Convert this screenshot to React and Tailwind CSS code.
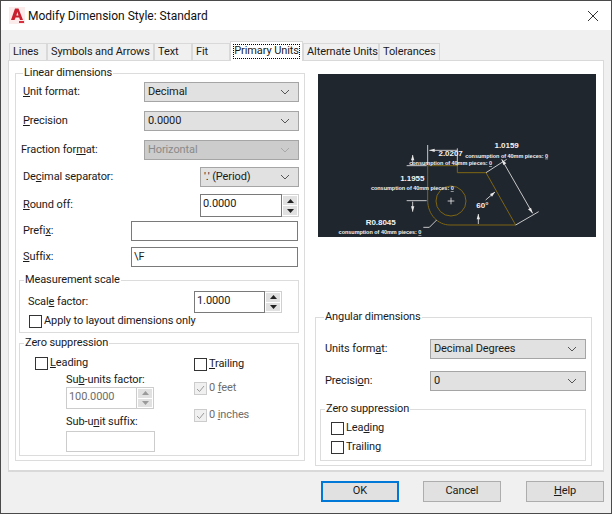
const font = { fontFamily: 'Roboto, "Noto Sans", sans-serif' }

function Chevron({ disabled }) {
  return (
    <svg width="10" height="6" viewBox="0 0 10 6" className="shrink-0">
      <path d="M1 1l4 4 4-4" fill="none" stroke={disabled ? '#a8a8a8' : '#555'} strokeWidth="1" />
    </svg>
  )
}

function Select({ value, width, disabled }) {
  return (
    <div className={`${width} h-[20px] shrink-0 flex items-center justify-between pl-[3px] pr-[8px] border border-[#a5a5a5] ${disabled ? 'bg-[#cccccc] text-[#8a8a8a]' : 'bg-[#e1e1e1]'}`}>
      <span>{value}</span>
      <Chevron disabled={disabled} />
    </div>
  )
}

function Spin({ disabled }) {
  const color = disabled ? '#9a9a9a' : '#222'
  return (
    <div className="w-[16px] self-stretch flex flex-col gap-px p-px">
      <div className="flex-1 bg-[#e1e1e1] flex items-center justify-center">
        <svg width="7" height="4" viewBox="0 0 7 4"><path d="M3.5 0L7 4H0z" fill={color} /></svg>
      </div>
      <div className="flex-1 bg-[#e1e1e1] flex items-center justify-center">
        <svg width="7" height="4" viewBox="0 0 7 4"><path d="M0 0h7L3.5 4z" fill={color} /></svg>
      </div>
    </div>
  )
}

function NumberBox({ value, width, height, disabled }) {
  return (
    <div className={`${width} ${height} shrink-0 flex`}>
      <div className={`flex-1 border pl-[2px] leading-[17px] ${disabled ? 'border-[#cccccc] text-[#6d6d6d]' : 'border-[#7a7a7a]'}`}>{value}</div>
      <div className={`flex border-y border-r ${disabled ? 'border-[#cccccc]' : 'border-[#d0d0d0]'}`}><Spin disabled={disabled} /></div>
    </div>
  )
}

function TextBox({ value, width, disabled }) {
  return (
    <div className={`${width} shrink-0 border pl-[2px] leading-[17px] ${disabled ? 'h-[21px] border-[#cccccc]' : 'h-[20px] border-[#7a7a7a]'}`}>{value}</div>
  )
}

function Check({ label, checked, disabled, className = '' }) {
  return (
    <div className={`flex items-center h-[13px] gap-[2px] whitespace-nowrap ${disabled ? 'text-[#6d6d6d]' : ''} ${className}`}>
      <span className={`w-[13px] h-[13px] shrink-0 border flex items-center justify-center ${disabled ? 'border-[#cccccc] bg-[#f0f0f0]' : 'border-[#333]'}`}>
        {checked && (
          <svg width="9" height="8" viewBox="0 0 9 8"><path d="M1 4l2.5 2.5L8 1" fill="none" stroke="#9a9a9a" /></svg>
        )}
      </span>
      <span>{label}</span>
    </div>
  )
}

function Group({ title, className = '', children }) {
  return (
    <fieldset className={`border border-[#dcdcdc] min-w-0 ${className}`}>
      <legend className="ml-[4px] px-[1px] h-[16px] leading-[15px] whitespace-nowrap">{title}</legend>
      {children}
    </fieldset>
  )
}

function Row({ label, className = '', children }) {
  return (
    <div className={`flex items-center justify-between ${className}`}>
      <span>{label}</span>
      {children}
    </div>
  )
}

function Preview() {
  const note = 'consumption of 40mm pieces: '
  return (
    <div className="w-[278px] h-[163px] bg-[#20262e] mt-[13px] ml-[3px] shrink-0">
      <svg width="278" height="163" viewBox="24 222 834 489">
        <g fill="none" stroke="#7d6512" strokeWidth="3">
          <path d="M353 497V600C353 645 385 675 420 675H617L528 518H442V497H353" />
          <circle cx="423" cy="603" r="45" />
        </g>
        <g fill="none" stroke="#e8e8e8" strokeWidth="2.5">
          <path d="M413 603h20M423 593v20" />
          <path d="M353 435v60M358 451h84M442 445v52" />
          <path d="M308 465v30M290 497h60M290 602h60M308 605v30" />
          <path d="M528 518L590 478M575 478L668 640M617 675L686 635" />
          <path d="M505 672v-30M527 600L555 576" />
          <path d="M380 660L358 682H340" />
        </g>
        <g fill="#e8e8e8">
          <path d="M358 451l16-5v10z" />
          <path d="M308 465l-5 16h10z" />
          <path d="M308 635l-5-16h10z" />
          <path d="M668 640l-14-12 9-5z" />
          <path d="M575 478l14 12-9 5z" />
          <path d="M505 642l-5 16h10z" />
          <path d="M555 576l-15 6 6 8z" />
        </g>
        <g fill="#f2f2f2" fontFamily="Liberation Sans, sans-serif" textAnchor="middle">
          <g fontSize="24" fontWeight="700">
            <text x="422" y="468">2.0207</text>
            <text x="307" y="543">1.1955</text>
            <text x="590" y="445">1.0159</text>
            <text x="517" y="625">60°</text>
            <text x="212" y="675">R0.8045</text>
          </g>
          <g fontSize="16.5" fontWeight="700">
            <text x="422" y="495">{note}<tspan textDecoration="underline">0</tspan></text>
            <text x="307" y="571">{note}<tspan textDecoration="underline">0</tspan></text>
            <text x="590" y="473">{note}<tspan textDecoration="underline">0</tspan></text>
            <text x="210" y="703">{note}<tspan textDecoration="underline">0</tspan></text>
          </g>
        </g>
      </svg>
    </div>
  )
}

function Tab({ label, width, active }) {
  if (active) {
    return (
      <div className={`${width} h-[20px] bg-white border border-b-0 border-[#d9d9d9] -mb-px relative z-10 p-[2px] whitespace-nowrap`}>
        <div className="h-[15px] border border-dotted border-black flex items-center justify-center">{label}</div>
      </div>
    )
  }
  return (
    <div className={`${width} h-[17px] bg-[#f0f0f0] border border-b-0 border-[#d9d9d9] flex items-center pl-[3px] whitespace-nowrap`}>{label}</div>
  )
}

function DialogButton({ children, primary, className = '' }) {
  return (
    <div className={`w-[78px] h-[21px] flex items-center justify-center bg-[#e1e1e1] ${primary ? 'border-2 border-[#0078d7]' : 'border border-[#adadad]'} ${className}`}>{children}</div>
  )
}

export default function App() {
  return (
    <div style={font} className="w-[612px] h-[514px] flex flex-col bg-[#f0f0f0] border border-[#4a4a4a] text-[11px] tracking-[-0.1px] text-[#1a1a1a] overflow-hidden">
      {/* Title bar */}
      <div className="h-[29px] shrink-0 bg-white flex items-center pl-[8px] pr-[12px]">
        <svg width="16" height="17" viewBox="0 0 16 17" className="shrink-0">
          <rect width="16" height="17" fill="#fbeceb" />
          <path d="M6 1.5h3.5L14 13h-3l-.8-2.4H6.6L5.6 13H2zM7.3 8.5h2.2L8.4 5z" fill="#c8202f" fillRule="evenodd" />
          <rect x="10" y="14" width="5" height="2" fill="#d9303f" />
        </svg>
        <span className="ml-[3px] text-[12px] tracking-normal text-[#111]">Modify Dimension Style: Standard</span>
        <svg width="12" height="12" viewBox="0 0 12 12" className="ml-auto">
          <path d="M1 1l10 10M11 1L1 11" stroke="#333" strokeWidth="1" fill="none" />
        </svg>
      </div>

      {/* Tabs */}
      <div className="flex items-end h-[30px] shrink-0 pl-[8px]">
        <Tab label="Lines" width="w-[38px]" />
        <Tab label="Symbols and Arrows" width="w-[107px]" />
        <Tab label="Text" width="w-[38px]" />
        <Tab label="Fit" width="w-[38px]" />
        <Tab label="Primary Units" width="w-[73px]" active />
        <Tab label="Alternate Units" width="w-[76px]" />
        <Tab label="Tolerances" width="w-[61px]" />
      </div>

      {/* Tab panel */}
      <div className="ml-[7px] w-[596px] h-[412px] shrink-0 bg-white border border-[#d9d9d9] border-b-2 flex">
        <div className="w-[290px] ml-[6px] mt-[4px] shrink-0">
          <Group title="Linear dimensions" className="pl-[3px] pr-[5px] pb-[4px]">
            <Row label={<span className="pl-[4px]"><u>U</u>nit format:</span>} className="mt-px">
              <Select value="Decimal" width="w-[155px]" />
            </Row>
            <Row label={<span className="pl-[4px]"><u>P</u>recision</span>} className="mt-[9px]">
              <Select value="0.0000" width="w-[155px]" />
            </Row>
            <Row label={<span className="pl-[2px]">Fraction for<u>m</u>at:</span>} className="mt-[9px]">
              <Select value="Horizontal" width="w-[155px]" disabled />
            </Row>
            <Row label={<span className="pl-[4px]">De<u>c</u>imal separator:</span>} className="mt-[7px]">
              <Select value="'.' (Period)" width="w-[99px]" />
            </Row>
            <Row label={<span className="pl-[4px]"><u>R</u>ound off:</span>} className="mt-[7px]">
              <NumberBox value="0.0000" width="w-[99px]" height="h-[23px]" />
            </Row>
            <Row label={<span className="pl-[4px]">Prefi<u>x</u>:</span>} className="mt-[4px] pr-px">
              <TextBox width="w-[167px]" />
            </Row>
            <Row label={<span className="pl-[4px]"><u>S</u>uffix:</span>} className="mt-[6px] pr-px">
              <TextBox value="\F" width="w-[167px]" />
            </Row>
            <Group title="Measurement scale" className="mt-[5px] pb-[4px]">
              <div className="flex items-center justify-between mt-[3px] pl-[8px] pr-[16px]">
                <span>Scal<u>e</u> factor:</span>
                <NumberBox value="1.0000" width="w-[88px]" height="h-[22px]" />
              </div>
              <Check label="Apply to layout dimensions only" className="mt-[2px] ml-[9px]" />
            </Group>
            <Group title="Zero suppression" className="mt-[2px] pb-[3px]">
              <div className="flex">
                <div className="w-[174px] pl-[15px] pt-[6px] shrink-0">
                  <Check label={<><u>L</u>eading</>} />
                  <div className="pl-[31px] mt-[2px] h-[15px] leading-[15px]">Su<u>b</u>-units factor:</div>
                  <div className="pl-[31px]">
                    <NumberBox value="100.0000" width="w-[88px]" height="h-[22px]" disabled />
                  </div>
                  <div className="pl-[31px] mt-[5px] h-[15px] leading-[15px]">Sub-u<u>n</u>it suffix:</div>
                  <div className="pl-[31px] mt-[2px]">
                    <TextBox width="w-[89px]" disabled />
                  </div>
                </div>
                <div className="pt-[7px]">
                  <Check label={<><u>T</u>railing</>} />
                  <Check label={<>0 <u>f</u>eet</>} checked disabled className="mt-[11px]" />
                  <Check label={<>0 <u>i</u>nches</>} checked disabled className="mt-[14px]" />
                </div>
              </div>
            </Group>
          </Group>
        </div>

        <div className="flex-1 flex flex-col ml-[10px] min-w-0">
          <Preview />
          <Group title="Angular dimensions" className="w-[277px] mt-[72px] pl-[4px] pr-[5px] pb-[4px]">
            <Row label={<span className="pl-[5px]">Units form<u>a</u>t:</span>} className="mt-[14px]">
              <Select value="Decimal Degrees" width="w-[156px]" />
            </Row>
            <Row label={<span className="pl-[5px]">Precisi<u>o</u>n:</span>} className="mt-[12px]">
              <Select value="0" width="w-[156px]" />
            </Row>
            <Group title="Zero suppression" className="mt-[10px] pb-[6px]">
              <Check label={<>Lea<u>d</u>ing</>} className="mt-[5px] ml-[10px]" />
              <Check label={<>Trailin<u>g</u></>} className="mt-[6px] ml-[10px]" />
            </Group>
          </Group>
        </div>
      </div>

      {/* Buttons */}
      <div className="flex-1 flex items-start justify-end pt-[9px] pr-[7px]">
        <DialogButton primary>OK</DialogButton>
        <DialogButton className="ml-[24px]">Cancel</DialogButton>
        <DialogButton className="ml-[25px]"><span><u>H</u>elp</span></DialogButton>
      </div>
    </div>
  )
}
